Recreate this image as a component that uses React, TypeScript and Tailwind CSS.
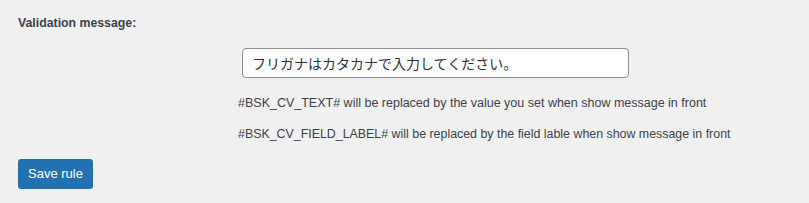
import React from 'react';

/**
 * Validation message settings row (WordPress admin style)
 */
export default function App() {
  return (
    <div
      className="min-h-screen bg-[#f0f0f1] text-[#3c434a] pl-[18px] pt-[14px]"
      style={{ fontFamily: '"Liberation Sans", "Noto Sans CJK JP", sans-serif' }}
    >
      {/* Label */}
      <div className="text-[12.3px] font-semibold text-[#3c434a] leading-[18px]">
        Validation message:
      </div>

      {/* Field + help */}
      <div className="pl-[224px] pt-[16px]">
        <input
          type="text"
          readOnly
          defaultValue="フリガナはカタカナで入力してください。"
          className="block w-[387px] h-[30px] px-[9px] bg-white border border-[#8c8f94] rounded-[4px] text-[14px] text-[#2c3338] outline-none"
          style={{ fontFamily: '"Noto Sans CJK JP", sans-serif' }}
        />
        <p className="mt-[17px] -ml-[4px] text-[12.5px] leading-[16px] text-[#3c434a]">
          #BSK_CV_TEXT# will be replaced by the value you set when show message in front
        </p>
        <p className="mt-[15px] -ml-[4px] text-[12.4px] leading-[16px] text-[#3c434a]">
          #BSK_CV_FIELD_LABEL# will be replaced by the field lable when show message in front
        </p>
      </div>

      {/* Submit */}
      <button
        type="button"
        className="mt-[17px] h-[30px] px-[10px] rounded-[3px] bg-[#2271b1] text-white text-[13px]"
      >
        Save rule
      </button>
    </div>
  );
}
